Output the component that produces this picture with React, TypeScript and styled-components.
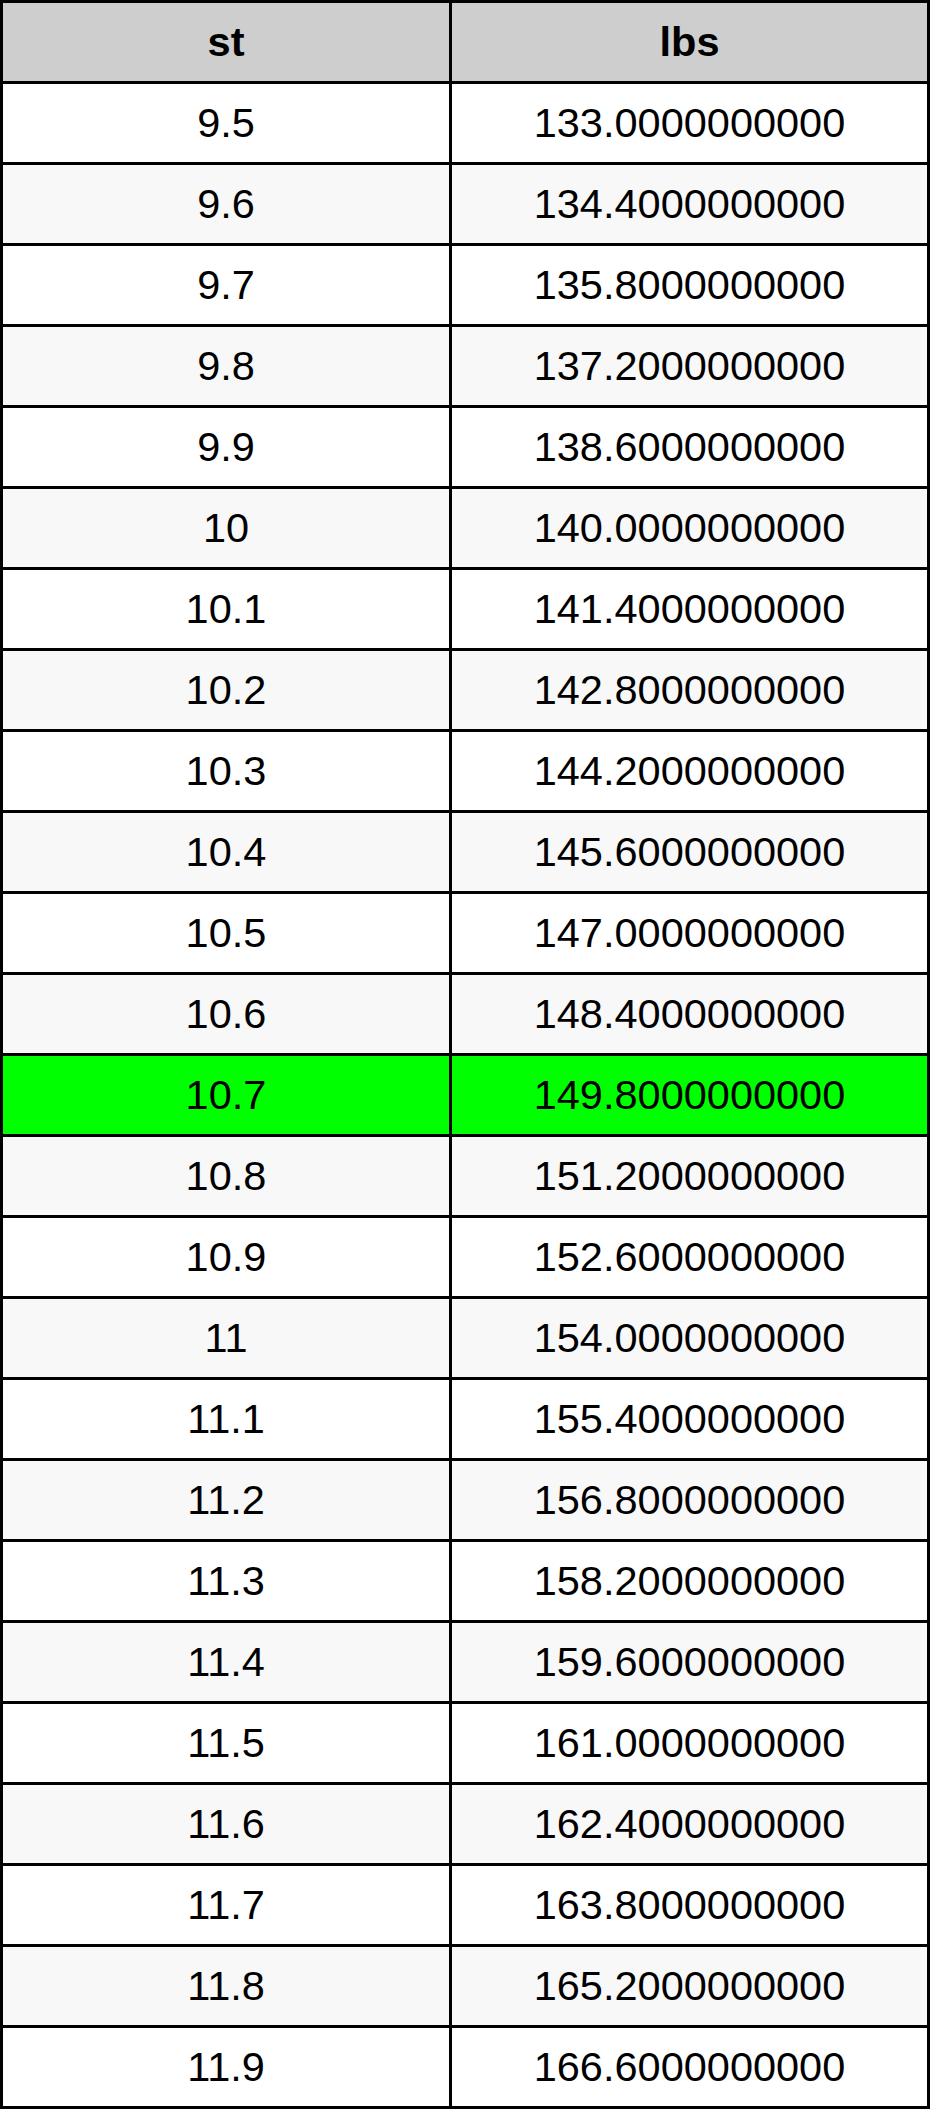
import React from "react"
import styled, { createGlobalStyle } from "styled-components"

const GlobalStyle = createGlobalStyle`
  html, body {
    margin: 0;
    padding: 0;
    background: #fff;
  }
  body {
    font-family: "Liberation Sans", Arial, sans-serif;
  }
`

const Table = styled.table`
  border-collapse: separate;
  border-spacing: 0;
  border-top: 3px solid #000;
  border-left: 3px solid #000;
  table-layout: fixed;
  width: 930px;
  font-family: "Liberation Sans", Arial, sans-serif;
  font-size: 41.5px;
  color: #000;
`

const Row = styled.tr<{ shade: "white" | "grey" | "green" }>`
  background: ${({ shade }) =>
    shade === "green" ? "#00ff00" : shade === "grey" ? "#f8f8f8" : "#ffffff"};
`

const HeadCell = styled.th<{ w: number }>`
  width: ${({ w }) => w}px;
  height: 78px;
  padding: 0;
  background: #cecece;
  font-weight: bold;
  text-align: center;
  vertical-align: middle;
  border-right: 3px solid #000;
  border-bottom: 3px solid #000;
`

const Cell = styled.td`
  height: 78px;
  padding: 0;
  text-align: center;
  vertical-align: middle;
  border-right: 3px solid #000;
  border-bottom: 3px solid #000;
`

const rows = Array.from({ length: 25 }, (_, i) => {
  const t = 95 + i
  const st = t % 10 === 0 ? String(t / 10) : `${Math.floor(t / 10)}.${t % 10}`
  const l = t * 14
  const lbs = `${Math.floor(l / 10)}.${l % 10}000000000`
  return { t, st, lbs }
})

export default function App() {
  return (
    <>
      <GlobalStyle />
      <Table>
        <thead>
          <tr>
            <HeadCell w={446}>st</HeadCell>
            <HeadCell w={475}>lbs</HeadCell>
          </tr>
        </thead>
        <tbody>
          {rows.map((r, i) => (
            <Row
              key={r.t}
              shade={r.t === 107 ? "green" : i % 2 === 0 ? "white" : "grey"}
            >
              <Cell>{r.st}</Cell>
              <Cell>{r.lbs}</Cell>
            </Row>
          ))}
        </tbody>
      </Table>
    </>
  )
}
